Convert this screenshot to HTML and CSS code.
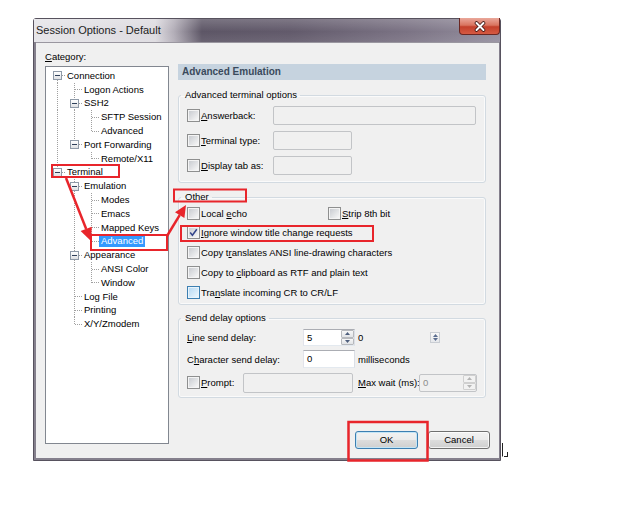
FILE: index.html
```html
<!DOCTYPE html>
<html>
<head>
<meta charset="utf-8">
<title>Session Options - Default</title>
<link rel="stylesheet" href="styles.css">
</head>
<body>
<div class="window">
  <div class="titlebar">
    <span class="title">Session Options - Default</span>
    <span class="close"><svg width="14" height="11" viewBox="0 0 14 11"><path d="M3.5 2 L10.5 9 M10.5 2 L3.5 9" stroke="#3a1512" stroke-width="3.6" stroke-linecap="round"/><path d="M3.5 2 L10.5 9 M10.5 2 L3.5 9" stroke="#fff" stroke-width="2" stroke-linecap="round"/></svg></span>
  </div>
  <div class="client">
    <div class="leftcol">
      <div class="cat"><u>C</u>ategory:</div>
      <div class="tree">
        <div class="r"><span class="e first"><span class="exp"></span></span><span class="lb">Connection</span></div>
        <div class="r"><span class="g v"></span><span class="e mid"></span><span class="lb">Logon Actions</span></div>
        <div class="r"><span class="g v"></span><span class="e mid"><span class="exp"></span></span><span class="lb">SSH2</span></div>
        <div class="r"><span class="g v"></span><span class="g v"></span><span class="e mid"></span><span class="lb">SFTP Session</span></div>
        <div class="r"><span class="g v"></span><span class="g v"></span><span class="e last"></span><span class="lb">Advanced</span></div>
        <div class="r"><span class="g v"></span><span class="e last"><span class="exp"></span></span><span class="lb">Port Forwarding</span></div>
        <div class="r"><span class="g v"></span><span class="g"></span><span class="e last"></span><span class="lb">Remote/X11</span></div>
        <div class="r"><span class="e last"><span class="exp"></span></span><span class="lb">Terminal</span></div>
        <div class="r"><span class="g"></span><span class="e mid"><span class="exp"></span></span><span class="lb">Emulation</span></div>
        <div class="r"><span class="g"></span><span class="g v"></span><span class="e mid"></span><span class="lb">Modes</span></div>
        <div class="r"><span class="g"></span><span class="g v"></span><span class="e mid"></span><span class="lb">Emacs</span></div>
        <div class="r"><span class="g"></span><span class="g v"></span><span class="e mid"></span><span class="lb">Mapped Keys</span></div>
        <div class="r"><span class="g"></span><span class="g v"></span><span class="e last"></span><span class="lb sel">Advanced</span></div>
        <div class="r"><span class="g"></span><span class="e mid"><span class="exp"></span></span><span class="lb">Appearance</span></div>
        <div class="r"><span class="g"></span><span class="g v"></span><span class="e mid"></span><span class="lb">ANSI Color</span></div>
        <div class="r"><span class="g"></span><span class="g v"></span><span class="e last"></span><span class="lb">Window</span></div>
        <div class="r"><span class="g"></span><span class="e mid"></span><span class="lb">Log File</span></div>
        <div class="r"><span class="g"></span><span class="e mid"></span><span class="lb">Printing</span></div>
        <div class="r"><span class="g"></span><span class="e last"></span><span class="lb">X/Y/Zmodem</span></div>
      </div>
    </div>
    <div class="rightcol">
      <div class="hdr">Advanced Emulation</div>

      <fieldset class="grp g1">
        <legend>Advanced terminal options</legend>
        <div class="frow"><span class="chk w86"><span class="box"></span><span><u>A</u>nswerback:</span></span><span class="fld w203"></span></div>
        <div class="frow"><span class="chk w86"><span class="box"></span><span><u>T</u>erminal type:</span></span><span class="fld w79"></span></div>
        <div class="frow"><span class="chk w86"><span class="box"></span><span><u>D</u>isplay tab as:</span></span><span class="fld w79"></span></div>
      </fieldset>

      <fieldset class="grp g2">
        <legend>Other</legend>
        <div class="crow"><span class="chk w141"><span class="box"></span><span>Local <u>e</u>cho</span></span><span class="chk"><span class="box"></span><span><u>S</u>trip 8th bit</span></span></div>
        <div class="crow"><span class="chk"><span class="box"><svg width="9" height="9" viewBox="0 0 9 9"><path d="M1.2 4.6 L3.4 7.2 L7.8 1.3" fill="none" stroke="#33448a" stroke-width="1.5"/></svg></span><span><u>I</u>gnore window title change requests</span></span></div>
        <div class="crow"><span class="chk"><span class="box"></span><span>Copy t<u>r</u>anslates ANSI line-drawing characters</span></span></div>
        <div class="crow"><span class="chk"><span class="box"></span><span>Copy to <u>c</u>lipboard as RTF and plain text</span></span></div>
        <div class="crow"><span class="chk"><span class="box hover"></span><span>Tra<u>n</u>slate incoming CR to CR/LF</span></span></div>
      </fieldset>

      <fieldset class="grp g3">
        <legend>Send delay options</legend>
        <div class="srow s1">
          <span class="slabel"><u>L</u>ine send delay:</span>
          <span class="spin"><span class="val">5</span><span class="sb"><span class="sbb"><svg width="5" height="3" viewBox="0 0 5 3"><polygon points="0,3 2.5,0 5,3" fill="#4d5e7c"/></svg></span><span class="sbb"><svg width="5" height="3" viewBox="0 0 5 3"><polygon points="0,0 2.5,3 5,0" fill="#4d5e7c"/></svg></span></span></span>
          <span class="unit w72">0</span>
          <span class="mini"><svg width="5" height="3" viewBox="0 0 5 3"><polygon points="0,3 2.5,0 5,3" fill="#5b6d8f"/></svg><svg width="5" height="3" viewBox="0 0 5 3"><polygon points="0,0 2.5,3 5,0" fill="#5b6d8f"/></svg></span>
        </div>
        <div class="srow s2">
          <span class="slabel">C<u>h</u>aracter send delay:</span>
          <span class="txt">0</span>
          <span class="unit">milliseconds</span>
        </div>
        <div class="srow s3">
          <span class="chk w56"><span class="box"></span><span><u>P</u>rompt:</span></span>
          <span class="fld w110 h20"></span>
          <span class="unit w64"><u>M</u>ax wait (ms):</span>
          <span class="fld w58 h18 maxw"><span class="dval">0</span><span class="sb dis"><span class="sbb"><svg width="5" height="3" viewBox="0 0 5 3"><polygon points="0,3 2.5,0 5,3" fill="#b4b4b4"/></svg></span><span class="sbb"><svg width="5" height="3" viewBox="0 0 5 3"><polygon points="0,0 2.5,3 5,0" fill="#b4b4b4"/></svg></span></span></span>
        </div>
      </fieldset>

      <div class="buttons">
        <button class="btn ok">OK</button>
        <button class="btn cancel">Cancel</button>
      </div>
    </div>
  </div>
</div>

<svg class="annot" width="617" height="510" viewBox="0 0 617 510">
  <g fill="none" stroke="#e8252b" stroke-width="2">
    <rect x="52" y="165" width="67" height="12"/>
    <rect x="91" y="235" width="76" height="15"/>
    <rect x="174" y="189.5" width="72" height="12"/>
    <rect x="181" y="226" width="192" height="15"/>
    <rect x="348.5" y="422" width="79" height="38.5" stroke-width="2.5"/>
    <path d="M66 178 L86.2 229" stroke-width="2.5"/>
    <path d="M167 236 L179.7 215.2" stroke-width="2.5"/>
  </g>
  <g fill="#e8252b">
    <polygon points="91,241 80.6,231.1 91.8,226.7"/>
    <polygon points="186,205 184.4,218.1 175,212.3"/>
  </g>
  <path d="M502.5 443 V456.5 M504 456.5 H508 M507.5 452 V456.5" fill="none" stroke="#222" stroke-width="1"/>
</svg>
</body>
</html>
```
FILE: styles.css
```css
html, body {
  margin: 0;
  padding: 0;
}
body {
  width: 617px;
  height: 510px;
  background: #ffffff;
  font-family: "Liberation Sans", Arial, sans-serif;
  font-size: 9.5px;
  color: #000;
  position: relative;
  overflow: hidden;
}
u { text-decoration: underline; text-underline-offset: 1px; }

.window {
  margin: 18px 0 0 33px;
  width: 468px;
  height: 443px;
  box-sizing: border-box;
  border: 1px solid #57525e;
  border-radius: 3px 3px 0 0;
  background: #85808d;
  display: flex;
  flex-direction: column;
}
.titlebar {
  height: 23px;
  flex: none;
  display: flex;
  align-items: flex-start;
  justify-content: space-between;
  background:
    linear-gradient(to bottom, rgba(255,255,255,0.18), rgba(255,255,255,0) 55%, rgba(255,255,255,0.08)),
    linear-gradient(to right, #e5e4e8 0%, #dddbe0 26%, #b3aeb8 30%, #5d5666 36%, #625a6b 55%, #7b7384 80%, #948e9e 100%);
}
.title {
  padding-left: 2px;
  line-height: 22px;
  font-size: 11px;
  color: #1c1c1c;
}
.close {
  width: 41px;
  height: 17px;
  margin-top: -1px;
  box-sizing: border-box;
  border: 1px solid #6b2722;
  border-top: none;
  border-radius: 0 0 4px 4px;
  background: linear-gradient(#eaa89b 0%, #d9745f 45%, #c3402b 55%, #d65a42 100%);
  display: flex;
  align-items: center;
  justify-content: center;
}

.client {
  flex: 1;
  margin: 0 1px 2px 2px;
  background: #f0f0f0;
  border-top: 1px solid #9a97a0;
  display: flex;
  gap: 9px;
  padding: 7px 0 0 9px;
}
.leftcol { width: 124px; flex: none; }
.cat { line-height: 13px; margin-bottom: 3px; }
.tree {
  height: 378px;
  box-sizing: border-box;
  border: 1px solid #828790;
  background: #fff;
  padding: 2px 0 0 3px;
}
.r {
  display: flex;
  align-items: center;
  height: 13.8px;
  white-space: nowrap;
}
.g, .e {
  width: 17px;
  flex: none;
  align-self: stretch;
  display: flex;
  align-items: center;
  justify-content: center;
}
.v {
  background: repeating-linear-gradient(#a0a0a0 0 1px, transparent 1px 2px) 8px 0 / 1px 100% no-repeat;
}
.mid {
  background:
    repeating-linear-gradient(#a0a0a0 0 1px, transparent 1px 2px) 8px 0 / 1px 100% no-repeat,
    repeating-linear-gradient(to right, #a0a0a0 0 1px, transparent 1px 2px) 9px 50% / 8px 1px no-repeat;
}
.last {
  background:
    repeating-linear-gradient(#a0a0a0 0 1px, transparent 1px 2px) 8px 0 / 1px 50% no-repeat,
    repeating-linear-gradient(to right, #a0a0a0 0 1px, transparent 1px 2px) 9px 50% / 8px 1px no-repeat;
}
.first {
  background:
    repeating-linear-gradient(#a0a0a0 0 1px, transparent 1px 2px) 8px 100% / 1px 50% no-repeat,
    repeating-linear-gradient(to right, #a0a0a0 0 1px, transparent 1px 2px) 9px 50% / 8px 1px no-repeat;
}
.exp {
  width: 9px;
  height: 9px;
  box-sizing: border-box;
  border: 1px solid #8f9aa8;
  background:
    linear-gradient(#2f405a, #2f405a) center / 5px 1px no-repeat,
    linear-gradient(#ffffff, #dfe1e4);
}
.lb {
  padding: 0 2px;
  margin-left: -1px;
  line-height: 12px;
}
.sel { background: #3399ff; color: #fff; }

.rightcol {
  width: 308px;
  flex: none;
  margin-top: 14px;
}
.hdr {
  height: 16px;
  line-height: 16px;
  padding-left: 4px;
  background: #c6d3df;
  color: #3a4a5c;
  font-weight: bold;
  font-size: 10px;
}
.grp {
  margin: 0;
  border: 1px solid #d2dae1;
  border-radius: 3px;
  min-width: 0;
  box-shadow: inset 0 0 0 1px #fafafa;
}
.grp legend {
  line-height: 12px;
  padding: 0 3px 0 4px;
  margin-left: -6px;
}
.g1 { margin-top: 9px; padding: 5px 8px 7px; display: flex; flex-direction: column; gap: 6px; }
.g2 { margin-top: 8px; padding: 2px 8px 4px; display: flex; flex-direction: column; gap: 3.75px; }
.g3 { margin-top: 7px; padding: 5px 8px 4px; display: flex; flex-direction: column; gap: 4px; }

.frow { display: flex; align-items: center; height: 19px; }
.crow { display: flex; align-items: center; height: 16px; }
.chk { display: flex; align-items: center; gap: 1px; white-space: nowrap; flex: none; }
.w86 { width: 86px; }
.w141 { width: 141px; }
.w56 { width: 56px; }
.box {
  width: 13px;
  height: 13px;
  box-sizing: border-box;
  border: 1px solid #8e8f8f;
  padding: 1px;
  background: linear-gradient(135deg, #c9ccd1, #f7f7f7) content-box, #f4f4f4;
  display: flex;
  align-items: center;
  justify-content: center;
  flex: none;
}
.box svg { display: block; }
.box.hover {
  border-color: #3c7fb1;
  background: linear-gradient(135deg, #b7daf4, #eaf6fd) content-box, #e8f4fc;
}
.fld {
  height: 19px;
  box-sizing: border-box;
  border: 1px solid #c2c4c7;
  border-radius: 2px;
  background: #f0f0f0;
  flex: none;
}
.w203 { width: 203px; }
.w79 { width: 79px; }
.w110 { width: 110px; }
.w58 { width: 58px; }
.h20 { height: 20px; }
.h18 { height: 18px; }

.srow { display: flex; align-items: center; white-space: nowrap; }
.s1 { height: 17px; }
.s2 { height: 18px; }
.s3 { height: 21px; }
.slabel { width: 116px; flex: none; }
.spin {
  width: 52px;
  height: 17px;
  box-sizing: border-box;
  border: 1px solid #abadb3;
  border-color: #abadb3 #dbdfe6 #e3e9ef #e2e3ea;
  background: #fff;
  display: flex;
  align-items: center;
  padding-left: 3px;
  flex: none;
}
.val { flex: 1; }
.sb {
  width: 13px;
  height: 15px;
  display: flex;
  flex-direction: column;
  flex: none;
}
.sbb {
  flex: 1;
  box-sizing: border-box;
  border: 1px solid #b7b9bd;
  border-radius: 1px;
  background: linear-gradient(#f7f7f7, #e1e3e6);
  display: flex;
  align-items: center;
  justify-content: center;
}
.sbb svg { display: block; }
.sb.dis .sbb { border-color: #d0d0d0; background: #f2f2f2; }
.txt {
  width: 52px;
  height: 18px;
  box-sizing: border-box;
  border: 1px solid #abadb3;
  border-color: #abadb3 #dbdfe6 #e3e9ef #e2e3ea;
  background: #fff;
  padding-left: 3px;
  line-height: 16px;
  flex: none;
}
.unit { margin-left: 3px; flex: none; }
.w72 { width: 72px; }
.w64 { width: 61px; margin-left: 5px; }
.mini {
  width: 10px;
  height: 11px;
  box-sizing: border-box;
  border: 1px solid #c9cdd3;
  background: linear-gradient(#f8f8f8, #e6e8eb);
  display: flex;
  flex-direction: column;
  align-items: center;
  justify-content: space-evenly;
}
.mini svg { display: block; }
.maxw {
  display: flex;
  align-items: center;
  padding-left: 3px;
}
.dval { flex: 1; color: #8d8d8d; }

.buttons {
  margin-top: 33px;
  margin-right: -4px;
  display: flex;
  justify-content: flex-end;
  gap: 10px;
}
.btn {
  height: 18px;
  box-sizing: border-box;
  padding: 0;
  border: 1px solid #707070;
  border-radius: 3px;
  background: linear-gradient(#f2f2f2 0%, #ebebeb 49%, #dddddd 50%, #cfcfcf 100%);
  box-shadow: inset 0 0 0 1px rgba(255,255,255,0.75);
  font-family: "Liberation Sans", Arial, sans-serif;
  font-size: 9.5px;
  color: #000;
  line-height: 16px;
  text-align: center;
}
.ok {
  width: 63px;
  border-color: #3c7fb1;
  box-shadow: inset 0 0 0 1px #c4e5f6;
}
.cancel { width: 62px; }

.annot {
  position: absolute;
  left: 0;
  top: 0;
  pointer-events: none;
}
```
